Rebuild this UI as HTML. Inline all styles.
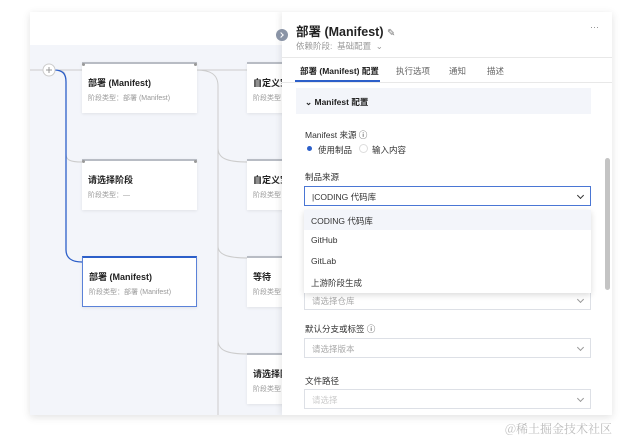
<!DOCTYPE html><html><head><meta charset="utf-8"><style>
*{box-sizing:border-box;margin:0;padding:0}
body{width:627px;height:441px;background:#fff;position:relative;overflow:hidden;font-family:"Liberation Sans","Noto Sans CJK SC",sans-serif;color:#222}
.a{position:absolute}
.card{position:absolute;left:30px;top:12px;width:582px;height:403px;box-shadow:0 2px 8px rgba(0,0,0,.12);background:#f3f5fa;overflow:hidden}
.node{position:absolute;width:115px;height:51px;background:#fff;border-top:2px solid #b8bcc4;box-shadow:0 1px 3px rgba(0,0,0,.08)}
.node b{position:absolute;left:6px;top:12px;font-size:9px}
.node i{position:absolute;left:6px;top:29px;font-size:7px;color:#999;font-style:normal}
.dot{position:absolute;width:3px;height:3px;border-radius:50%;background:#999;top:-1px}
.lbl{position:absolute;font-size:8.5px;color:#333}
.sel{position:absolute;left:304px;width:287px;height:20px;border:1px solid #dde0e6;background:#fff;font-size:8.5px;color:#aaa;padding:4px 7px}
.chev{position:absolute;right:7px;top:6px;width:5px;height:5px;border-right:1px solid #999;border-bottom:1px solid #999;transform:rotate(45deg)}
</style></head><body>
<div class="card">
<div class="a" style="left:0;top:0;width:260px;height:33px;background:#fff"></div>
<svg class="a" style="left:0;top:0" width="260" height="403">
<path d="M0 58H52" stroke="#ccc" fill="none"/>
<path d="M24 58C34 58 36 60 36 70V142C36 148 40 150 52 150" stroke="#ccc" fill="none"/>
<path d="M166 58H218M166 58C180 58 188 62 188 74V403M188 136C188 146 196 150 218 150M188 234C188 242 196 246 218 246M188 328C188 338 196 342 218 342" stroke="#ccc" fill="none"/>
<path d="M24 58C33 58 36 62 36 70V238C36 246 42 250 52 250" stroke="#2c5fc9" stroke-width="1.3" fill="none"/>
<circle cx="19" cy="58" r="6" fill="#fff" stroke="#ccc"/><path d="M16 58h6M19 55v6" stroke="#999"/>
</svg>
<div class="node" style="left:52px;top:50px"><b>部署 (Manifest)</b><i>阶段类型：部署 (Manifest)</i><span class="dot" style="left:0"></span><span class="dot" style="right:0"></span></div>
<div class="node" style="left:52px;top:147px"><b>请选择阶段</b><i>阶段类型：—</i><span class="dot" style="left:0"></span><span class="dot" style="right:0"></span></div>
<div class="node" style="left:52px;top:244px;border:1px solid #5b82d8;border-top:2px solid #2c5fc9"><b>部署 (Manifest)</b><i>阶段类型：部署 (Manifest)</i></div>
<div class="node" style="left:217px;top:50px"><b>自定义宝</b><i>阶段类型</i></div>
<div class="node" style="left:217px;top:147px"><b>自定义宝</b><i>阶段类型</i></div>
<div class="node" style="left:217px;top:244px"><b>等待</b><i>阶段类型</i></div>
<div class="node" style="left:217px;top:341px"><b>请选择阶</b><i>阶段类型</i></div>
<div class="a" style="left:252px;top:0;width:330px;height:403px;background:#fff;box-shadow:-2px 0 6px rgba(0,0,0,.08)"></div>
</div>
<div class="a" style="left:276px;top:29px;width:12px;height:12px;border-radius:50%;background:#8a94a6"></div>
<div class="a" style="left:279px;top:33px;width:4px;height:4px;border-right:1px solid #fff;border-top:1px solid #fff;transform:rotate(45deg)"></div>
<div class="a" style="left:296px;top:21px;font-size:12.5px;font-weight:bold">部署 (Manifest) <span style="font-weight:normal;color:#777;font-size:10px">✎</span></div>
<div class="a" style="left:590px;top:22px;font-size:9px;color:#888">···</div>
<div class="a" style="left:296px;top:40px;font-size:8.5px;color:#999">依赖阶段:&nbsp; 基础配置 &nbsp;⌄</div>
<div class="a" style="left:282px;top:57px;width:330px;height:1px;background:#e8e8e8"></div>
<div class="a" style="left:300px;top:65px;font-size:8.5px;font-weight:bold">部署 (Manifest) 配置</div>
<div class="a" style="left:396px;top:65px;font-size:8.5px;color:#666">执行选项</div>
<div class="a" style="left:449px;top:65px;font-size:8.5px;color:#666">通知</div>
<div class="a" style="left:487px;top:65px;font-size:8.5px;color:#666">描述</div>
<div class="a" style="left:282px;top:82px;width:330px;height:1px;background:#e8e8e8"></div>
<div class="a" style="left:295px;top:80px;width:85px;height:2px;background:#2c5fc9"></div>
<div class="a" style="left:296px;top:88px;width:295px;height:26px;background:#f3f5fa"></div>
<div class="a" style="left:305px;top:96px;font-size:8.5px;font-weight:bold">⌄ Manifest 配置</div>
<div class="a" style="left:605px;top:158px;width:5px;height:132px;background:#c4c4c4;border-radius:3px"></div>
<div class="lbl" style="left:305px;top:129px">Manifest 来源 ⓘ</div>
<div class="a" style="left:307px;top:146px;width:5px;height:5px;border-radius:50%;background:#2c5fc9"></div>
<div class="lbl" style="left:318px;top:144px">使用制品</div>
<div class="a" style="left:359px;top:144px;width:9px;height:9px;border-radius:50%;border:1px solid #ddd"></div>
<div class="lbl" style="left:372px;top:144px">输入内容</div>
<div class="lbl" style="left:305px;top:171px">制品来源</div>
<div class="sel" style="top:186px;border-color:#4a76d4;color:#333">|CODING 代码库<span class="chev" style="border-color:#333"></span></div>
<div class="sel" style="top:290px">请选择仓库<span class="chev"></span></div>
<div class="a" style="left:304px;top:210px;width:287px;height:83px;background:#fff;box-shadow:0 2px 6px rgba(0,0,0,.15);font-size:8.5px;color:#333">
<div style="height:20px;background:#f3f5fa;padding:5px 7px">CODING 代码库</div>
<div style="height:21px;padding:5px 7px">GitHub</div>
<div style="height:21px;padding:5px 7px">GitLab</div>
<div style="height:21px;padding:5px 7px">上游阶段生成</div></div>
<div class="lbl" style="left:305px;top:323px">默认分支或标签 ⓘ</div>
<div class="sel" style="top:338px">请选择版本<span class="chev"></span></div>
<div class="lbl" style="left:305px;top:375px">文件路径</div>
<div class="sel" style="top:389px;color:#ccc">请选择<span class="chev"></span></div>
<div class="a" style="left:505px;top:420px;font-size:12px;color:#bbb;font-family:'Noto Serif CJK SC',serif">@稀土掘金技术社区</div>
</body></html>
